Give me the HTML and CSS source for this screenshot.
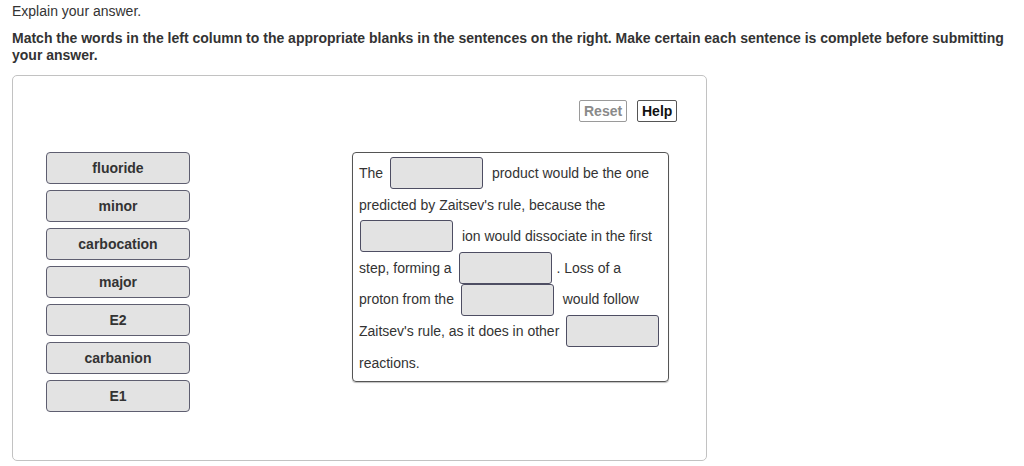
FILE: index.html
```html
<!DOCTYPE html>
<html>

<head>
  <meta charset="UTF-8">
  <title>Explain your answer</title>
  <link rel="stylesheet" href="styles.css">
</head>

<body>
  <p class="prompt">Explain your answer.</p>
  <p class="instructions">Match the words in the left column to the appropriate blanks in the sentences on the right. Make certain each sentence is complete before submitting your answer.</p>

  <div class="panel">
    <div class="toolbar">
      <button type="button" class="tool-btn reset-btn">Reset</button>
      <button type="button" class="tool-btn help-btn">Help</button>
    </div>

    <div class="match-area">
      <div class="word-list">
        <div class="word">fluoride</div>
        <div class="word">minor</div>
        <div class="word">carbocation</div>
        <div class="word">major</div>
        <div class="word">E2</div>
        <div class="word">carbanion</div>
        <div class="word">E1</div>
      </div>

      <div class="sentence-box">
        The <span class="blank"></span> product would be the one<br>
        predicted by Zaitsev's rule, because the<br>
        <span class="blank first"></span> ion would dissociate in the first<br>
        step, forming a <span class="blank"></span>. Loss of a<br>
        proton from the <span class="blank"></span> would follow<br>
        Zaitsev's rule, as it does in other <span class="blank"></span><br>
        reactions.
      </div>
    </div>
  </div>
</body>

</html>
```

FILE: styles.css
```css
body {
  font-family: "Liberation Sans", Arial, sans-serif;
  font-size: 14px;
  color: #333;
  margin: 0;
  padding: 0 12px;
}

.prompt {
  margin: 3px 0 0;
  line-height: 17px;
}

.instructions {
  font-weight: bold;
  line-height: 17px;
  margin: 10px 0 0;
  width: 1000px;
}

.panel {
  margin-top: 11px;
  width: 695px;
  height: 386px;
  box-sizing: border-box;
  border: 1px solid #c2c2c2;
  border-radius: 5px;
}

.toolbar {
  display: flex;
  justify-content: flex-end;
  gap: 10px;
  padding: 24px 29px 0 0;
}

.tool-btn {
  font-family: "Liberation Sans", Arial, sans-serif;
  font-size: 14px;
  font-weight: bold;
  height: 22px;
  padding: 0 4px;
  background: #fff;
  border-radius: 2px;
  cursor: pointer;
}

.reset-btn {
  width: 48px;
  color: #8a8a8a;
  border: 1px solid #9a9a9a;
}

.help-btn {
  width: 40px;
  color: #111;
  border: 1px solid #555;
}

.match-area {
  display: flex;
  gap: 162px;
  padding: 30px 0 0 33px;
}

.word-list {
  display: flex;
  flex-direction: column;
  gap: 6px;
}

.word {
  width: 144px;
  height: 32px;
  box-sizing: border-box;
  display: flex;
  align-items: center;
  justify-content: center;
  background: #e3e3e3;
  border: 1px solid #5e5e70;
  border-radius: 4px;
  font-weight: bold;
  color: #333;
}

.sentence-box {
  width: 317px;
  height: 230px;
  box-sizing: border-box;
  border: 1px solid #555;
  border-radius: 4px;
  box-shadow: 0 1px 1px rgba(0, 0, 0, 0.25);
  padding: 5px 6px 0;
  line-height: 31.6px;
  white-space: nowrap;
}

.blank {
  display: inline-block;
  width: 93px;
  height: 32px;
  box-sizing: border-box;
    vertical-align: middle;
  margin: -2px 5px 0 3px;
  background: #e3e3e3;
  border: 1px solid #4e4e63;
  border-radius: 3px;
}

.blank.first {
  margin-left: 1px;
}
```
